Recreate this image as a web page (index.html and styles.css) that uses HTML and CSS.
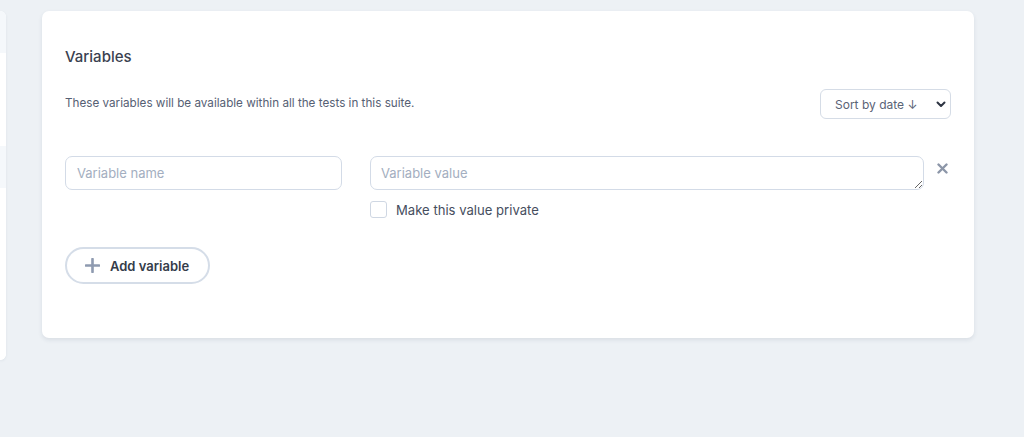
FILE: index.html
```html
<!DOCTYPE html>
<html lang="en">
<head>
<meta charset="utf-8">
<title>Variables</title>
<link rel="stylesheet" href="styles.css">
</head>
<body>
<div class="layout">
  <aside class="sidebar">
    <div class="side-band"></div>
    <div class="side-block"></div>
    <div class="side-band"></div>
    <div class="side-rest"></div>
  </aside>
  <main class="card">
    <h2 class="title">Variables</h2>
    <div class="desc-row">
      <p class="desc">These variables will be available within all the tests in this suite.</p>
      <div class="select-wrap">
        <select class="sort">
          <option>Sort by date ↓</option>
        </select>
        <svg class="chev" width="10" height="7" viewBox="0 0 10 7"><path d="M1.5 1.5 L5 5 L8.5 1.5" fill="none" stroke="#2d3442" stroke-width="2" stroke-linecap="round" stroke-linejoin="round"/></svg>
      </div>
    </div>
    <div class="var-row">
      <input class="field name" type="text" placeholder="Variable name">
      <div class="value-col">
        <textarea class="field value" rows="1" placeholder="Variable value"></textarea>
        <label class="check">
          <span class="box"></span>
          <span class="check-text">Make this value private</span>
        </label>
      </div>
      <button class="remove" aria-label="Remove">
        <svg width="11" height="11" viewBox="0 0 11 11"><path d="M1.5 1.5 L9.5 9.5 M9.5 1.5 L1.5 9.5" stroke="#8c96a8" stroke-width="2.4" stroke-linecap="round"/></svg>
      </button>
    </div>
    <button class="add">
      <svg width="15" height="15" viewBox="0 0 15 15"><path d="M7.5 1 V14 M1 7.5 H14" stroke="#8e9ab0" stroke-width="2.6" stroke-linecap="round"/></svg>
      <span>Add variable</span>
    </button>
  </main>
</div>
</body>
</html>
```

FILE: styles.css
```css
* { box-sizing: border-box; }
html, body { margin: 0; padding: 0; }
body {
  background: #edf1f5;
  font-family: Inter, "Noto Sans", "Liberation Sans", sans-serif;
  color: #3b4252;
  height: 437px;
  overflow: hidden;
}
.layout {
  display: flex;
  align-items: flex-start;
  gap: 36px;
  padding-top: 11px;
}
.sidebar {
  width: 6px;
  height: 349px;
  background: #ffffff;
  border-radius: 0 6px 6px 0;
  box-shadow: 0 1px 3px rgba(40, 60, 90, 0.08);
  display: flex;
  flex-direction: column;
  overflow: hidden;
}
.side-band { height: 42px; background: #f5f8fb; }
.side-block { height: 93px; background: #ffffff; }
.side-rest { flex: 1; background: #ffffff; }
.card {
  width: 932px;
  height: 327px;
  background: #ffffff;
  border-radius: 7px;
  box-shadow: 0 2px 4px rgba(40, 60, 90, 0.10);
  padding: 36px 23px 0 23px;
}
.title {
  margin: 0;
  font-size: 15px;
  line-height: 20px;
  font-weight: 500;
  color: #3a4150;
}
.desc-row {
  display: flex;
  justify-content: space-between;
  align-items: center;
  margin-top: 22px;
}
.desc {
  margin: 0;
  font-size: 11.7px;
  color: #566074;
  position: relative;
  top: -1px;
}
.select-wrap {
  position: relative;
  width: 131px;
  height: 30px;
}
.sort {
  appearance: none;
  -webkit-appearance: none;
  width: 100%;
  height: 100%;
  border: 1px solid #d5dce6;
  border-radius: 6px;
  background: #ffffff;
  font-family: inherit;
  font-size: 12px;
  color: #5a6376;
  padding: 0 0 0 14px;
}
.chev {
  position: absolute;
  right: 5px;
  top: 12px;
  pointer-events: none;
}
.var-row {
  display: flex;
  align-items: flex-start;
  margin-top: 37px;
}
.field {
  height: 34px;
  border: 1px solid #d3dbe7;
  border-radius: 7px;
  font-family: inherit;
  font-size: 13px;
  color: #3b4252;
  padding: 0 11px;
  background: #ffffff;
  outline: none;
}
.field::placeholder { color: #a3aec0; }
.name { width: 277px; }
.value-col {
  margin-left: 28px;
  display: flex;
  flex-direction: column;
}
.value {
  width: 554px;
  padding-top: 8px;
  padding-left: 10px;
  line-height: 16px;
  resize: vertical;
  display: block;
}
.check {
  display: flex;
  align-items: center;
  margin-top: 11px;
  gap: 9px;
}
.box {
  width: 17px;
  height: 17px;
  border: 1px solid #cfd7e3;
  border-radius: 3px;
  background: #ffffff;
}
.check-text {
  font-size: 13.1px;
  color: #464e5e;
}
.remove {
  border: 0;
  background: none;
  padding: 0;
  margin: 7px 0 0 13px;
  width: 11px;
  height: 11px;
  display: flex;
}
.add {
  margin-top: 29px;
  height: 37px;
  width: 145px;
  border: 2px solid #d5dde8;
  border-radius: 19px;
  background: #ffffff;
  display: flex;
  align-items: center;
  gap: 10px;
  padding: 0 0 0 18px;
  font-family: inherit;
  font-size: 13px;
  font-weight: 600;
  color: #353c4a;
}
```
